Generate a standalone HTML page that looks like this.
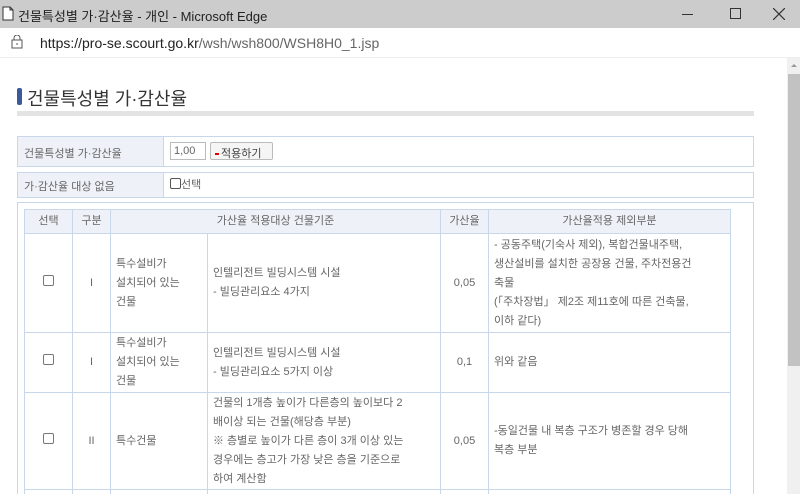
<!DOCTYPE html>
<html><head><meta charset="utf-8"><style>
*{margin:0;padding:0;box-sizing:border-box}
html,body{width:800px;height:494px;overflow:hidden}
body{background:#fff;font-family:"Liberation Sans","Noto Sans CJK KR",sans-serif;position:relative;color:#666}
.a{position:absolute}
table{border-collapse:collapse;font-size:11px;color:#666}
td{border:1px solid #c9d7ea;line-height:19px;vertical-align:middle}
.c{text-align:center}
.cb{display:inline-block;width:11px;height:11px;border:1px solid #777;border-radius:2px;background:#fff}
</style></head><body>
<div class="a" style="left:0;top:0;width:800px;height:28px;background:#cccccc"></div>
<svg class="a" style="left:2px;top:6px" width="12" height="15"><path d="M1 1h7l3 3v10H1z M8 1v3h3" fill="#fff" stroke="#333" stroke-width="1"/></svg>
<div class="a" style="left:18px;top:6px;font-size:13px;color:#222">건물특성별 가·감산율 - 개인 - Microsoft Edge</div>
<div class="a" style="left:682px;top:14px;width:11px;height:1px;background:#333"></div>
<div class="a" style="left:730px;top:8px;width:11px;height:11px;border:1px solid #333"></div>
<svg class="a" style="left:773px;top:8px" width="12" height="12"><path d="M0 0L12 12M12 0L0 12" stroke="#333" stroke-width="1.2"/></svg>
<svg class="a" style="left:11px;top:35px" width="12" height="14"><rect x="1" y="5" width="10" height="8" fill="none" stroke="#555"/><path d="M3 5V3a3 3 0 0 1 6 0v2" fill="none" stroke="#555"/><rect x="5.5" y="8" width="1" height="2" fill="#555"/></svg>
<div class="a" style="left:40px;top:35px;font-size:14px;color:#222">https://pro-se.scourt.go.kr<span style="color:#666">/wsh/wsh800/WSH8H0_1.jsp</span></div>
<div class="a" style="left:0;top:57px;width:800px;height:1px;background:#eee"></div>
<div class="a" style="left:787px;top:58px;width:13px;height:436px;background:#f0f0f0"></div>
<div class="a" style="left:788px;top:74px;width:12px;height:292px;background:#c2c2c2"></div>
<div class="a" style="left:791px;top:64px;width:0;height:0;border-left:3px solid transparent;border-right:3px solid transparent;border-bottom:3px solid #999"></div>
<div class="a" style="left:17px;top:88px;width:5px;height:17px;background:#3a5a9c;border-radius:2px"></div>
<div class="a" style="left:27px;top:85px;font-size:18px;color:#333">건물특성별 가·감산율</div>
<div class="a" style="left:17px;top:111px;width:737px;height:5px;background:#e3e3e3"></div>
<div class="a" style="left:17px;top:136px;width:737px;height:31px;border:1px solid #c9d7ea"></div>
<div class="a" style="left:18px;top:137px;width:146px;height:29px;background:#eef2f8;border-right:1px solid #c9d7ea;font-size:11px;padding:8px 0 0 6px">건물특성별 가·감산율</div>
<div class="a" style="left:170px;top:142px;width:36px;height:18px;border:1px solid #bbb;font-size:11px;padding:2px 3px">1,00</div>
<div class="a" style="left:210px;top:142px;width:63px;height:18px;border:1px solid #bbb;border-radius:2px;background:#f5f5f5;font-size:11px;padding:2px 0 0 4px;color:#444"><span style="display:inline-block;width:4px;height:2px;background:#d00;vertical-align:middle;margin-right:2px"></span>적용하기</div>
<div class="a" style="left:17px;top:172px;width:737px;height:26px;border:1px solid #c9d7ea"></div>
<div class="a" style="left:18px;top:173px;width:146px;height:24px;background:#eef2f8;border-right:1px solid #c9d7ea;font-size:11px;padding:5px 0 0 6px">가·감산율 대상 없음</div>
<div class="a" style="left:170px;top:176px;font-size:11px"><span class="cb" style="vertical-align:-1px;border-color:#555"></span>선택</div>
<div class="a" style="left:17px;top:202px;width:737px;height:292px;border:1px solid #c9d7ea;border-bottom:none"></div>
<table class="a" style="left:24px;top:209px;width:707px">
<colgroup><col style="width:48px"><col style="width:38px"><col style="width:97px"><col style="width:233px"><col style="width:48px"><col></colgroup>
<tr style="height:24px;background:#eef2f8"><td class="c">선택</td><td class="c">구분</td><td class="c" colspan="2">가산율 적용대상 건물기준</td><td class="c">가산율</td><td class="c">가산율적용 제외부분</td></tr>
<tr style="height:99px"><td class="c"><span class="cb"></span></td><td class="c">I</td><td style="padding-left:5px">특수설비가<br>설치되어 있는<br>건물</td><td style="padding-left:5px">인텔리전트 빌딩시스템 시설<br>- 빌딩관리요소 4가지</td><td class="c">0,05</td><td style="padding-left:5px">- 공동주택(기숙사 제외), 복합건물내주택,<br>생산설비를 설치한 공장용 건물, 주차전용건<br>축물<br>(「주차장법」 제2조 제11호에 따른 건축물,<br>이하 같다)</td></tr>
<tr style="height:60px"><td class="c"><span class="cb"></span></td><td class="c">I</td><td style="padding-left:5px">특수설비가<br>설치되어 있는<br>건물</td><td style="padding-left:5px">인텔리전트 빌딩시스템 시설<br>- 빌딩관리요소 5가지 이상</td><td class="c">0,1</td><td style="padding-left:5px">위와 같음</td></tr>
<tr style="height:97px"><td class="c"><span class="cb"></span></td><td class="c">II</td><td style="padding-left:5px">특수건물</td><td style="padding-left:5px">건물의 1개층 높이가 다른층의 높이보다 2<br>배이상 되는 건물(해당층 부분)<br>※ 층별로 높이가 다른 층이 3개 이상 있는<br>경우에는 층고가 가장 낮은 층을 기준으로<br>하여 계산함</td><td class="c">0,05</td><td style="padding-left:5px">-동일건물 내 복층 구조가 병존할 경우 당해<br>복층 부분</td></tr>
</table>
<div class="a" style="left:24px;top:489px;width:1px;height:5px;background:#c9d7ea"></div>
<div class="a" style="left:72px;top:489px;width:1px;height:5px;background:#c9d7ea"></div>
<div class="a" style="left:110px;top:489px;width:1px;height:5px;background:#c9d7ea"></div>
<div class="a" style="left:207px;top:489px;width:1px;height:5px;background:#c9d7ea"></div>
<div class="a" style="left:440px;top:489px;width:1px;height:5px;background:#c9d7ea"></div>
<div class="a" style="left:488px;top:489px;width:1px;height:5px;background:#c9d7ea"></div>
<div class="a" style="left:730px;top:489px;width:1px;height:5px;background:#c9d7ea"></div>
</body></html>
